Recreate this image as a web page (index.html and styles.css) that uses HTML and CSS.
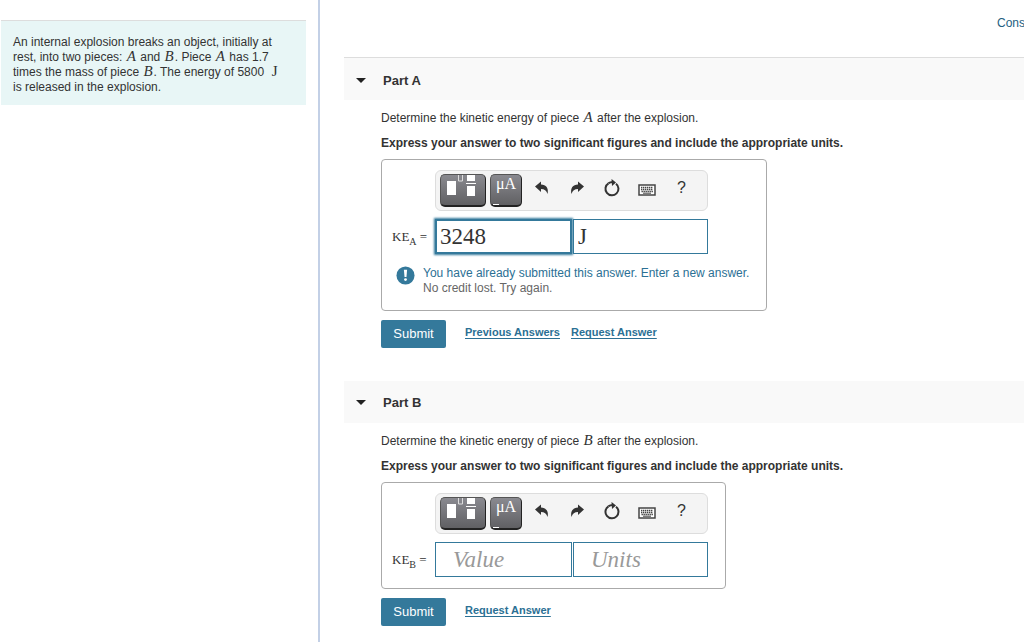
FILE: index.html
```html
<!DOCTYPE html>
<html lang="en">
  <head>
    <meta charset="UTF-8" />
    <meta name="viewport" content="width=device-width, initial-scale=1.0" />
    <title>Internal explosion</title>

    <!-- CSS -->
    <link rel="stylesheet" href="styles.css">
  </head>
  <body>
    <!-- icons shared by both toolbars -->
    <svg class="sprite" aria-hidden="true">
      <symbol id="templates" viewBox="0 0 44 30">
        <g fill="#fff">
          <rect x="6" y="6" width="9" height="14" />
          <rect x="26" y="0" width="8" height="6" />
          <rect x="25" y="8" width="10" height="1" />
          <rect x="26" y="11" width="8" height="10" />
        </g>
        <path d="M17.500 0v6h4V0" fill="none" stroke="#ddd" />
      </symbol>
      <symbol id="undo" viewBox="0 0 14 14">
        <path d="M0 5.500 6 .5v3c5 .3 8 3.500 6.500 9.500C11.500 9.500 9.500 8 6 8v3z" fill="#333" />
      </symbol>
      <symbol id="reset" viewBox="0 0 16 18">
        <path d="M4.500 4.300A6.500 6.500 0 1 0 12 4.700" fill="none" stroke="#333" stroke-width="2" />
        <path d="M4.500 4.300Q6 3 9 3" fill="none" stroke="#333" stroke-width="2" />
        <path d="M7.500 0l4.500 3.500L8 7z" fill="#333" />
      </symbol>
      <symbol id="keyboard" viewBox="0 0 18 12">
        <rect x="1" y="1" width="16" height="10" fill="#fff" stroke="#444" stroke-width="1.500" />
        <path d="M3 3.500h12M3 5.500h12M3.500 7.500h12" stroke="#444" stroke-width="1.400" stroke-dasharray="1.400 .6" />
        <path d="M5 9.200h8" stroke="#444" />
      </symbol>
      <symbol id="alert" viewBox="0 0 20 20">
        <circle cx="10" cy="10" r="9.500" fill="#34799b" />
        <path d="M8.300 4h3.400l-.7 7.500H9z" fill="#fff" />
        <circle cx="10" cy="14.300" r="1.500" fill="#fff" />
      </symbol>
    </svg>

    <div class="page">
      <aside class="sidebar">
        <p class="problem">
          An internal explosion breaks an object, initially at rest, into two
          pieces: <i class="math">A</i> and <i class="math">B</i>. Piece
          <i class="math">A</i> has 1.7 times the mass of piece
          <i class="math">B</i>. The energy of 5800 &nbsp;<span class="math">J</span>
          is released in the explosion.
        </p>
      </aside>

      <main class="content">
        <nav class="topbar">
          <a href="#" class="constants">Constants</a>
        </nav>

        <!-- Part A -->
        <section class="part">
          <h2 class="partHeader first"><span class="arrow"></span>Part A</h2>
          <form class="partBody">
            <p>Determine the kinetic energy of piece <i class="math">A</i> after the explosion.</p>
            <p class="hint">Express your answer to two significant figures and include the appropriate units.</p>
            <div class="answerBox">
              <div class="toolbar">
                <button type="button" class="dark templates" aria-label="Templates"><svg><use href="#templates" /></svg></button>
                <button type="button" class="dark symbols">μA</button>
                <button type="button" class="tool" aria-label="Undo"><svg><use href="#undo" /></svg></button>
                <button type="button" class="tool redo" aria-label="Redo"><svg><use href="#undo" /></svg></button>
                <button type="button" class="tool reset" aria-label="Reset"><svg><use href="#reset" /></svg></button>
                <button type="button" class="tool keyboard" aria-label="Keyboard shortcuts"><svg><use href="#keyboard" /></svg></button>
                <button type="button" class="tool help" aria-label="Help">?</button>
              </div>
              <label class="variable" for="valueA">KE<sub>A</sub> =</label>
              <div class="inputs">
                <input type="text" id="valueA" class="value active" value="3248" />
                <input type="text" class="units" value="J" aria-label="Units" />
              </div>
              <div class="message">
                <svg class="alertIcon"><use href="#alert" /></svg>
                <p><span class="notice">You have already submitted this answer. Enter a new answer.</span><br />No credit lost. Try again.</p>
              </div>
            </div>
            <div class="actions">
              <button type="submit" class="submit">Submit</button>
              <a href="#">Previous Answers</a>
              <a href="#">Request Answer</a>
            </div>
          </form>
        </section>

        <!-- Part B -->
        <section class="part">
          <h2 class="partHeader"><span class="arrow"></span>Part B</h2>
          <form class="partBody">
            <p>Determine the kinetic energy of piece <i class="math">B</i> after the explosion.</p>
            <p class="hint">Express your answer to two significant figures and include the appropriate units.</p>
            <div class="answerBox">
              <div class="toolbar">
                <button type="button" class="dark templates" aria-label="Templates"><svg><use href="#templates" /></svg></button>
                <button type="button" class="dark symbols">μA</button>
                <button type="button" class="tool" aria-label="Undo"><svg><use href="#undo" /></svg></button>
                <button type="button" class="tool redo" aria-label="Redo"><svg><use href="#undo" /></svg></button>
                <button type="button" class="tool reset" aria-label="Reset"><svg><use href="#reset" /></svg></button>
                <button type="button" class="tool keyboard" aria-label="Keyboard shortcuts"><svg><use href="#keyboard" /></svg></button>
                <button type="button" class="tool help" aria-label="Help">?</button>
              </div>
              <label class="variable" for="valueB">KE<sub>B</sub> =</label>
              <div class="inputs">
                <input type="text" id="valueB" class="value" placeholder="Value" />
                <input type="text" class="units" placeholder="Units" aria-label="Units" />
              </div>
            </div>
            <div class="actions">
              <button type="submit" class="submit">Submit</button>
              <a href="#">Request Answer</a>
            </div>
          </form>
        </section>
      </main>
    </div>
  </body>
</html>
```

FILE: styles.css
```css
* {
  box-sizing: border-box;
}

body {
  margin: 0;
  font-family: "Liberation Sans", Arial, sans-serif;
  font-size: 12px;
  line-height: 15px;
  color: #333;
  background-color: #fff;
  overflow: hidden;
}

p {
  margin: 0;
}

a {
  color: #2b7094;
}

.sprite {
  display: none;
}

.page {
  display: flex;
  min-height: 100vh;
}

.sidebar {
  flex: 0 0 320px;
  padding: 20px 12px 0 1px;
  border-right: 2px solid #c3d0e6;
}

.problem {
  padding: 14px 20px 10px 12px;
  background-color: #e8f6f6;
  border-top: 1px solid #ddd;
}

.math {
  padding: 0 1px;
  font-family: "Liberation Serif", serif;
  font-size: 15px;
  line-height: 0;
}

.content {
  flex: 1;
  min-width: 0;
  padding-left: 24px;
}

.topbar {
  display: flex;
  height: 57px;
  padding-top: 16px;
}

.constants {
  margin-left: auto;
  margin-right: -27px;
  color: #24607f;
  text-decoration: none;
}

.partHeader {
  display: flex;
  align-items: center;
  gap: 17px;
  height: 42px;
  margin: 0;
  padding-left: 12px;
  font-size: 13px;
  background-color: #f9f9f9;
}

.partHeader.first {
  height: 43px;
  padding-top: 2px;
  border-top: 1px solid #ddd;
}

.arrow {
  border: 5px solid transparent;
  border-top-color: #222;
  border-bottom: 0;
}

.partBody {
  padding: 11px 0 33px 37px;
}

.hint {
  margin: 10px 0 8px;
  font-weight: bold;
}

/* answer box */
.answerBox {
  display: grid;
  grid-template-columns: 43px auto;
  justify-content: start;
  align-items: center;
  row-gap: 8px;
  width: fit-content;
  padding: 10px 17px 11px 10px;
  border: 1px solid #aaa;
  border-radius: 4px;
}

.toolbar {
  grid-column: 2;
  justify-self: start;
  display: flex;
  align-items: flex-start;
  width: 273px;
  height: 41px;
  padding: 3px 4px;
  background-color: #f4f4f4;
  border: 1px solid #ddd;
  border-radius: 6px;
}

.toolbar svg {
  display: block;
}

.dark {
  height: 33px;
  margin-right: 4px;
  padding: 0;
  color: #fff;
  background-image: linear-gradient(#8a8a90, #606063);
  border: 1px solid #555;
  border-right-color: #222;
  border-bottom: 2px solid #222;
  border-radius: 5px;
}

.templates {
  width: 46px;
}

.templates svg {
  width: 44px;
  height: 30px;
}

.symbols {
  position: relative;
  width: 32px;
  margin-right: 2px;
  padding-bottom: 13px;
  font-family: "Liberation Serif", serif;
  font-size: 16px;
}

.symbols::after {
  content: "";
  position: absolute;
  left: 2px;
  bottom: 0;
  width: 6px;
  height: 1px;
  background-color: #fff;
}

.tool {
  display: flex;
  align-items: center;
  justify-content: center;
  width: 35px;
  height: 28px;
  padding: 0;
  background: none;
  border: 0;
}

.tool svg {
  width: 14px;
  height: 14px;
}

.redo svg {
  transform: scaleX(-1);
}

.reset svg {
  width: 16px;
  height: 18px;
}

.keyboard {
  height: 32px;
}

.keyboard svg {
  width: 18px;
  height: 12px;
}

.help {
  font-family: "Liberation Sans", Arial, sans-serif;
  font-size: 16px;
  color: #333;
}

.variable {
  font-family: "Liberation Serif", serif;
  font-size: 13px;
}

.variable sub {
  font-size: 10px;
  line-height: 0;
}

.inputs {
  display: flex;
  gap: 1px;
}

.value,
.units {
  height: 35px;
  padding: 0 4px;
  font-family: "Liberation Serif", serif;
  font-size: 23px;
  color: #333;
  background-color: #fff;
  border: 1px solid #34799b;
  border-radius: 0;
}

.value {
  width: 137px;
}

.units {
  width: 135px;
}

.active {
  border-width: 2px;
  padding-left: 3px;
  outline: 0;
  box-shadow: 0 0 2px 1px #34799b;
}

.value:placeholder-shown,
.units:placeholder-shown {
  padding-left: 17px;
}

.value::placeholder,
.units::placeholder {
  font-style: italic;
  color: #999;
}

.message {
  grid-column: 1 / 3;
  display: flex;
  gap: 8px;
  padding: 4px 0 3px 4px;
  color: #666;
}

.alertIcon {
  width: 19px;
  height: 19px;
}

.notice {
  color: #2b7094;
}

/* submit row */
.actions {
  display: flex;
  align-items: center;
  gap: 11px;
  margin-top: 9px;
  font-size: 11px;
  font-weight: bold;
}

.actions a {
  margin-bottom: 3px;
  text-underline-offset: 2px;
}

.submit {
  width: 65px;
  height: 28px;
  margin-right: 8px;
  padding: 0 0 2px;
  font-family: "Liberation Sans", Arial, sans-serif;
  font-size: 13px;
  color: #fff;
  background-color: #34799b;
  border: 0;
  border-radius: 2px;
}
```
